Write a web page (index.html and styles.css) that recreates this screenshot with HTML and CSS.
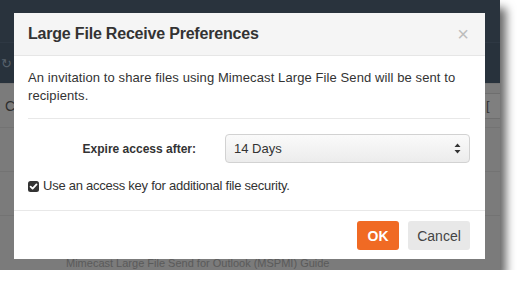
FILE: index.html
```html
<!DOCTYPE html>
<html>
	<head>
		<meta charset="utf-8" />
		<title>Large File Receive Preferences</title>
		<link rel="stylesheet" href="styles.css">
	</head>
	<body>
	<div class="screen">
		<div class="app">
			<div class="topbar"></div>
			<div class="toolbar"><span class="refresh">&#x21bb;</span></div>
			<div class="row head"><span class="cell">C</span><span class="edge-btn">[</span></div>
			<div class="row"></div>
			<div class="row"></div>
			<div class="row last"><span class="under">Mimecast Large File Send for Outlook (MSPMI) Guide</span></div>
		</div>

		<div class="modal">
			<div class="modal-header">
				<h4 class="modal-title">Large File Receive Preferences</h4>
				<span class="close">&times;</span>
			</div>
			<div class="modal-body">
				<p class="intro">An invitation to share files using Mimecast Large File Send will be sent to recipients.</p>
				<div class="sep"></div>
				<div class="form-row">
					<label class="label">Expire access after:</label>
					<div class="select">
						<span>14 Days</span>
						<svg width="7" height="11" viewBox="0 0 7 11"><path d="M3.5 0.5 L6.5 4 L0.5 4 Z M0.5 7 L6.5 7 L3.5 10.5 Z" fill="#333"/></svg>
					</div>
				</div>
				<div class="check-row">
					<svg class="check" width="11" height="11" viewBox="0 0 11 11"><rect x="0" y="0" width="11" height="11" rx="2.5" fill="#333"/><path d="M2.6 5.6 L4.6 7.6 L8.5 3.4" stroke="#fff" stroke-width="1.8" fill="none" stroke-linecap="round" stroke-linejoin="round"/></svg>
					<span class="check-text">Use an access key for additional file security.</span>
				</div>
			</div>
			<div class="modal-footer">
				<button class="btn ok">OK</button>
				<button class="btn cancel">Cancel</button>
			</div>
		</div>
	</div>
	</body>
</html>
```

FILE: styles.css
```css
body{
	margin: 0;
	background: #fff;
	font-family: "Liberation Sans", Arial, sans-serif;
	color: #333;
}
.screen{
	position: relative;
	width: 500px;
	height: 270px;
	overflow: hidden;
	box-shadow: 6px 8px 9px rgba(0,0,0,0.6);
}
.app{
	height: 100%;
	background: #7b7b7b;
}
.topbar{
	height: 42px;
	background: #29333d;
	border-bottom: 1px solid #2e3843;
}
.toolbar{
	height: 40px;
	background: #28323c;
	display: flex;
	align-items: center;
}
.refresh{
	color: #56606a;
	font-size: 13px;
	margin-left: 1px;
}
.row{
	height: 43px;
	border-bottom: 1px solid #737373;
	display: flex;
	align-items: center;
	justify-content: space-between;
}
.row.head{
	border-top: 1px solid #747474;
}
.cell{
	margin-left: 5px;
	font-size: 14px;
	color: #2e2e2e;
}
.edge-btn{
	width: 14px;
	height: 24px;
	border: 1px solid #6e6e6e;
	border-right: 0;
	border-radius: 3px 0 0 3px;
	font-size: 13px;
	color: #333;
	line-height: 24px;
	padding-left: 8px;
	background: #7f7f7f;
}
.row.last{
	border-bottom: 0;
	align-items: flex-end;
}
.under{
	font-size: 11px;
	color: #5a5a5a;
	margin-left: 66px;
	margin-bottom: -10px;
}
.modal{
	position: absolute;
	left: 14px;
	top: 13px;
	width: 471px;
	height: 246px;
	background: #fff;
	display: flex;
	flex-direction: column;
}
.modal-header{
	height: 42px;
	background: #f5f5f5;
	border-bottom: 1px solid #e6e6e6;
	padding: 0 16px 0 14px;
	display: flex;
	align-items: center;
	justify-content: space-between;
}
.modal-title{
	margin: 0;
	font-size: 16px;
	font-weight: bold;
	letter-spacing: -0.2px;
	color: #333;
}
.close{
	font-size: 20px;
	color: #bdbdbd;
	line-height: 1;
}
.modal-body{
	padding: 13px 15px 0 14px;
	font-size: 13px;
	flex: 1;
}
.intro{
	margin: 0;
	line-height: 18px;
	letter-spacing: 0.1px;
}
.sep{
	height: 1px;
	background: #e8e8e8;
	margin: 13px 0 15px;
}
.form-row{
	display: grid;
	grid-template-columns: 168px 1fr;
	column-gap: 29px;
	align-items: center;
}
.label{
	text-align: right;
	font-weight: bold;
	font-size: 12px;
}
.select{
	height: 27px;
	border: 1px solid #d2d2d2;
	border-radius: 4px;
	background: linear-gradient(#fafafa, #ececec);
	display: flex;
	align-items: center;
	justify-content: space-between;
	padding: 0 8px 0 8px;
}
.check-row{
	margin-top: 14px;
	display: flex;
	align-items: center;
	line-height: 18px;
}
.check{
	margin-right: 4px;
}
.check-text{
	letter-spacing: -0.25px;
}
.modal-footer{
	border-top: 1px solid #e8e8e8;
	padding: 10px 15px 9px;
	display: flex;
	justify-content: flex-end;
	gap: 9px;
}
.btn{
	height: 29px;
	border: 0;
	border-radius: 3px;
	font-family: "Liberation Sans", Arial, sans-serif;
	font-size: 14px;
}
.ok{
	width: 42px;
	background: #f06a24;
	color: #fff;
	font-weight: bold;
}
.cancel{
	width: 62px;
	background: #e8e8e8;
	color: #444;
}
```
